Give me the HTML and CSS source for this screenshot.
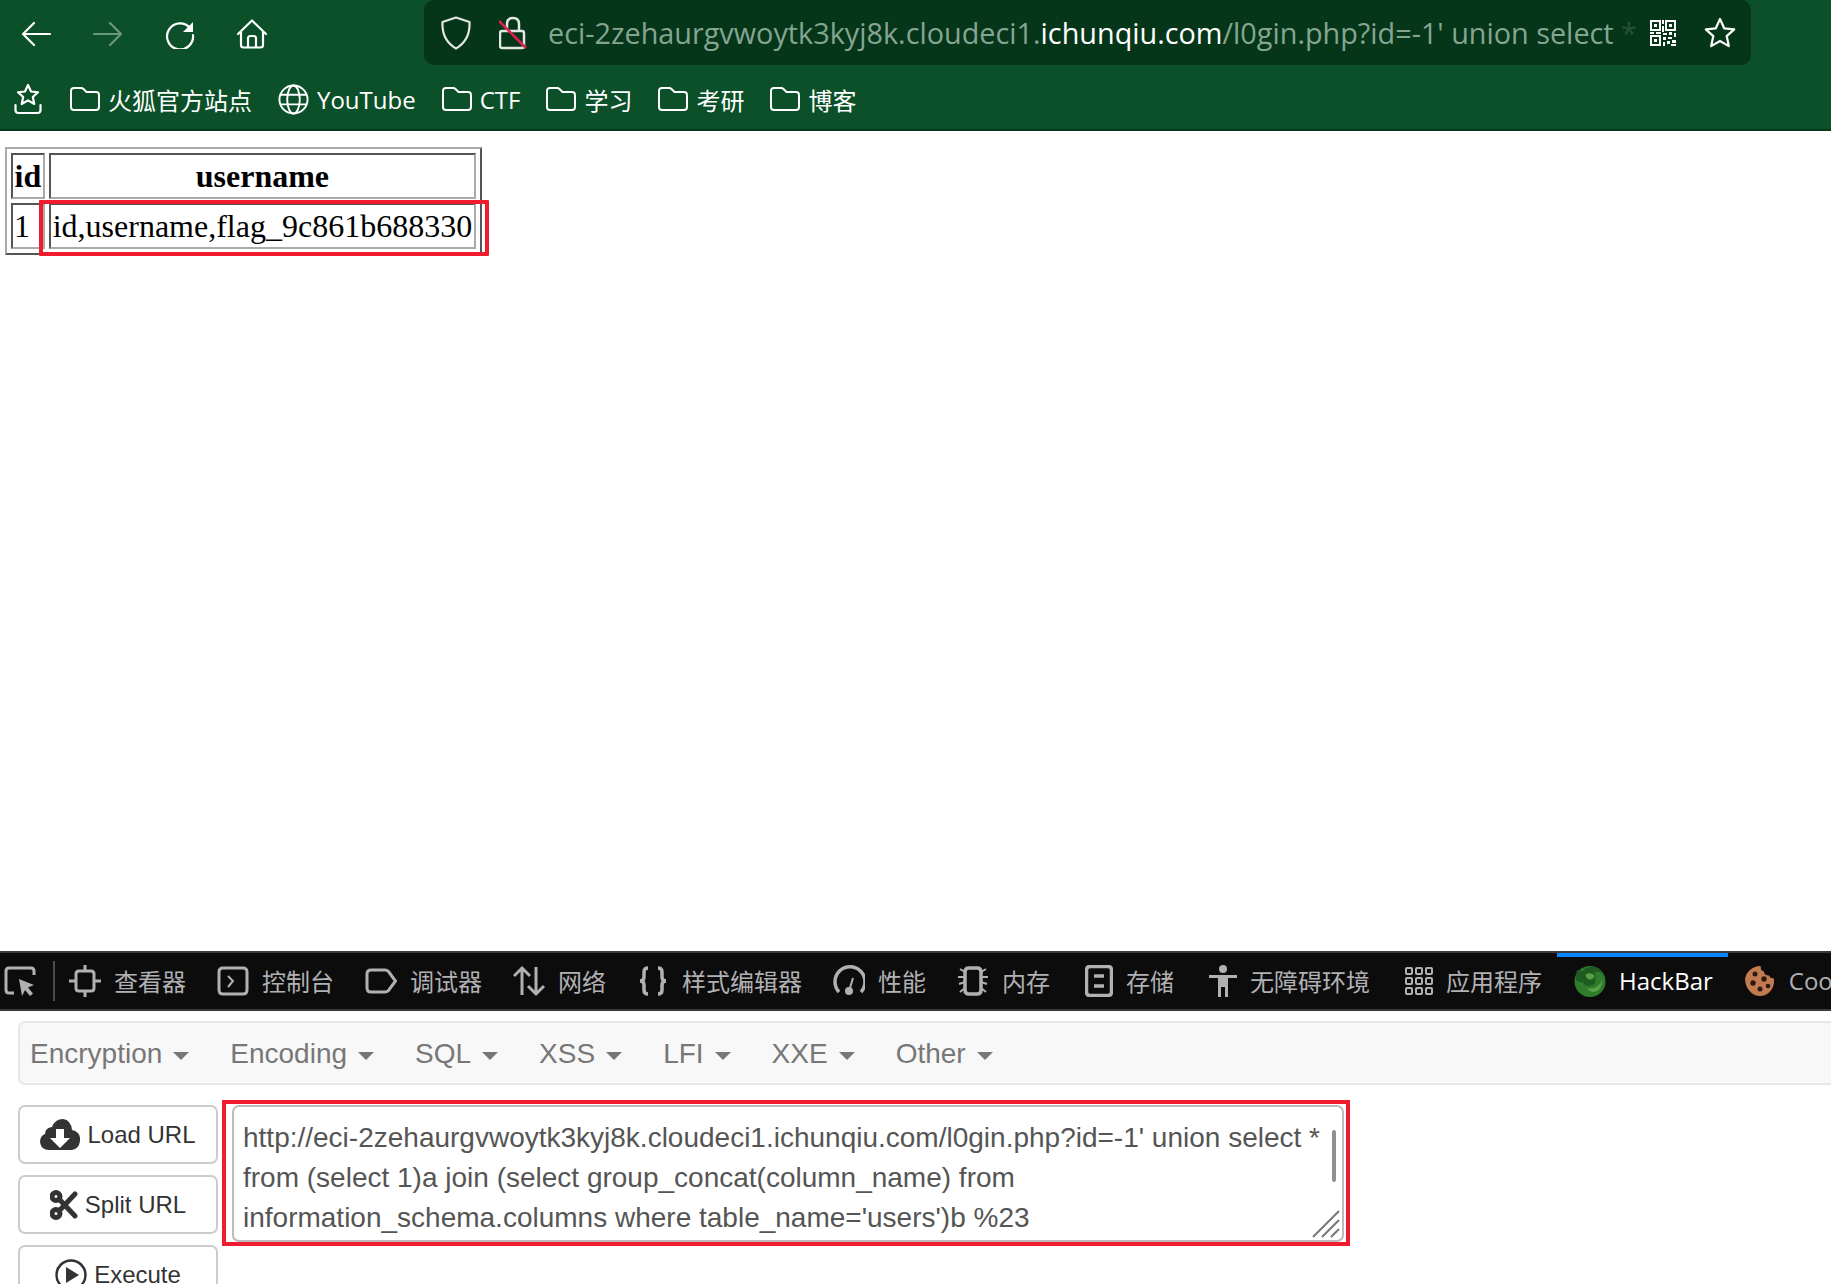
FILE: index.html
```html
<!DOCTYPE html>
<html lang="en">

<head>
  <meta charset="UTF-8">
  <title>l0gin.php</title>
  <link rel="stylesheet" href="styles.css">
</head>

<body>
  <svg class="defs" width="0" height="0">
    <symbol id="folder" viewBox="0 0 30 26">
      <path d="M4 2h7q1.500 0 2.500 1l3 3h9.500q3 0 3 3v12q0 3-3 3h-22q-3 0-3-3v-16q0-3 3-3z" fill="none" stroke="#fff" stroke-width="2" />
    </symbol>
  </svg>

  <div class="chrome">
    <div class="navbar">
      <div class="nav-buttons">
        <svg class="nav-icon" viewBox="0 0 30 30"><path d="M29 15H2M13 4 2 15l11 11" /></svg>
        <svg class="nav-icon dim" viewBox="0 0 30 30"><path d="M1 15h27M17 4l11 11-11 11" /></svg>
        <svg class="nav-icon" viewBox="0 0 30 30"><path d="M25 9A13 13 0 1 0 28 16" /><path class="solid" d="M28 3v10h-10z" /></svg>
        <svg class="nav-icon" viewBox="0 0 30 30"><path d="M1 15 15 1.500 29 15M4 12v14q0 2.500 2.500 2.500h17q2.500 0 2.500-2.500v-14M11 28.500v-9q0-2.500 2.500-2.500h3q2.500 0 2.500 2.500v9" /></svg>
      </div>
      <div class="urlbar">
        <svg class="shield" viewBox="0 0 30 34"><path d="M15 1.500 28.500 6q1 18-13.500 26.500Q.5 24 1.500 6z" /></svg>
        <svg class="lock" viewBox="0 0 28 34">
          <path class="lock-body" d="M3 15h20q2 0 2 2v13q0 2-2 2h-20q-2 0-2-2v-13q0-2 2-2zM8 15v-7q0-6 6-6t6 6v7" />
          <path class="lock-slash" d="M0 5 27 32" />
        </svg>
        <div class="url">eci-2zehaurgvwoytk3kyj8k.cloudeci1.<span class="domain">ichunqiu.com</span>/l0gin.php?id=-1' union select <span class="fade">*</span></div>
        <svg class="qr" viewBox="0 0 28 28">
          <path d="M1 1h11v11h-11zM3 3v7h7v-7zM16 1h11v11h-11zM18 3v7h7v-7zM1 16h11v11h-11zM3 18v7h7v-7z" fill-rule="evenodd" />
          <path d="M5 5h3v3h-3zM20 5h3v3h-3zM5 20h3v3h-3zM13 1h2v4h-2zM13 7h2v6h-2zM1 13h4v2h-4zM7 13h5v2h-5zM14 14h4v2h-4zM20 13h3v3h-3zM25 14h2v4h-2zM14 18h3v3h-3zM19 18h4v2h-4zM14 23h2v4h-2zM18 22h3v3h-3zM23 21h4v3h-4zM22 25h5v2h-5z" />
        </svg>
        <svg class="star" viewBox="0 0 32 32"><path d="M16 2l4.200 9.300 10 1.100-7.500 6.700 2.100 10-8.800-5.100-8.800 5.100 2.100-10-7.500-6.700 10-1.100z" /></svg>
      </div>
    </div>
    <div class="bookmarks">
      <svg class="import-icon" viewBox="0 0 28 32">
        <path d="M14 2l3 6.500 7 .8-5.200 4.700 1.500 7-6.300-3.600-6.300 3.600 1.500-7-5.200-4.700 7-.8z" />
        <path d="M1.500 22v5q0 3 3 3h19q3 0 3-3v-5" />
      </svg>
      <div class="bookmark first"><svg class="folder"><use href="#folder" /></svg>火狐官方站点</div>
      <div class="bookmark">
        <svg class="globe" viewBox="0 0 32 32">
          <circle cx="16" cy="16" r="14.500" />
          <ellipse cx="16" cy="16" rx="6.500" ry="14.500" />
          <path d="M2 11h28M2 21h28" />
        </svg>YouTube
      </div>
      <div class="bookmark"><svg class="folder"><use href="#folder" /></svg>CTF</div>
      <div class="bookmark"><svg class="folder"><use href="#folder" /></svg>学习</div>
      <div class="bookmark"><svg class="folder"><use href="#folder" /></svg>考研</div>
      <div class="bookmark"><svg class="folder"><use href="#folder" /></svg>博客</div>
    </div>
  </div>

  <div class="page">
    <table class="result">
      <tr>
        <th>id</th>
        <th>username</th>
      </tr>
      <tr>
        <td>1</td>
        <td class="marked">id,username,flag_9c861b688330</td>
      </tr>
    </table>
  </div>

  <div class="devtools">
    <svg class="pick" viewBox="0 0 32 32">
      <path class="tab-line" d="M30 10V6q0-3-3-3H5q-3 0-3 3v19q0 3 3 3h5" />
      <path class="tab-solid" d="M15 14l15 6-6 2.500 5 6-3 2.500-5-6-3 6z" />
    </svg>
    <div class="tab-sep"></div>
    <div class="tab first">
      <svg class="tab-icon" viewBox="0 0 32 32"><path class="tab-line thick" d="M10 6h12q3 0 3 3v14q0 3-3 3h-12q-3 0-3-3v-14q0-3 3-3zM16 0v6M16 26v6M0 16h7M25 16h7" /></svg>查看器
    </div>
    <div class="tab">
      <svg class="tab-icon" viewBox="0 0 32 32"><path class="tab-line thick" d="M6 3h20q4 0 4 4v18q0 4-4 4h-20q-4 0-4-4v-18q0-4 4-4z" /><path class="tab-line" d="M11 11l5 5-5 6" /></svg>控制台
    </div>
    <div class="tab">
      <svg class="tab-icon" viewBox="0 0 32 32"><path class="tab-line thick" d="M6 5h14q2 0 3.500 1.500l7 9.500-7 9.500q-1.500 1.500-3.500 1.500h-14q-4 0-4-4v-14q0-4 4-4z" /></svg>调试器
    </div>
    <div class="tab">
      <svg class="tab-icon" viewBox="0 0 32 32"><path class="tab-line thick" d="M9 30V3M1 11l8-8 8 8M23 2v27M15 21l8 8 8-8" /></svg>网络
    </div>
    <div class="tab">
      <svg class="tab-icon" viewBox="0 0 32 32"><path class="tab-line heavy" d="M11 3q-4 0-4 4v5q0 4-4 4 4 0 4 4v5q0 4 4 4M21 3q4 0 4 4v5q0 4 4 4-4 0-4 4v5q0 4-4 4" /></svg>样式编辑器
    </div>
    <div class="tab">
      <svg class="tab-icon" viewBox="0 0 32 32"><path class="tab-line heavy" d="M6 27A15 15 0 1 1 28 27" /><path class="tab-line" d="M16 26 20 13" /><circle class="tab-solid" cx="16" cy="26" r="4" /></svg>性能
    </div>
    <div class="tab">
      <svg class="tab-icon" viewBox="0 0 32 32"><path class="tab-line heavy" d="M12 3h8q4 0 4 4v18q0 4-4 4h-8q-4 0-4-4v-18q0-4 4-4z" /><path class="tab-line" d="M8 7l-5-3M8 12h-7M8 17l-6 2M8 23l-5 4M24 7l5-3M24 12h7M24 17l6 2M24 23l5 4" /></svg>内存
    </div>
    <div class="tab wide-gap">
      <svg class="tab-icon narrow" viewBox="0 0 28 32"><path class="tab-line heavy" d="M5 1.500h18q3.500 0 3.500 3.500v22q0 3.500-3.500 3.500h-18q-3.500 0-3.500-3.500v-22q0-3.500 3.500-3.500zM9 11h10M9 21h10" /></svg>存储
    </div>
    <div class="tab wide-gap">
      <svg class="tab-icon narrow" viewBox="0 0 28 32">
        <circle class="tab-solid" cx="14" cy="4" r="4" />
        <path class="tab-solid" d="M0 10h28v3h-9v19h-3v-10h-4v10h-3v-19h-9z" />
      </svg>无障碍环境
    </div>
    <div class="tab wide-gap">
      <svg class="tab-icon narrow" viewBox="0 0 28 28">
        <g class="tab-line">
          <rect x="1" y="1" width="6" height="6" rx="1" />
          <rect x="11" y="1" width="6" height="6" rx="1" />
          <rect x="21" y="1" width="6" height="6" rx="1" />
          <rect x="1" y="11" width="6" height="6" rx="1" />
          <rect x="11" y="11" width="6" height="6" rx="1" />
          <rect x="21" y="11" width="6" height="6" rx="1" />
          <rect x="1" y="21" width="6" height="6" rx="1" />
          <rect x="11" y="21" width="6" height="6" rx="1" />
          <rect x="21" y="21" width="6" height="6" rx="1" />
        </g>
      </svg>应用程序
    </div>
    <div class="tab selected">
      <svg class="tab-icon" viewBox="0 0 32 32">
        <circle cx="16" cy="16.500" r="15.500" fill="#2f7d2c" />
        <path d="M3 5q4 1 6 1 4-5 12-4 5 1 8 6-5-2-9-1 3 3 1 7 2 6-6 7-5 0-6-4-3 1-7-2 0-6 1-10z" fill="#1f5a20" />
        <path d="M12 9q6-2 9 2-3 5-7 3-3-2-2-5zM13 23q7 2 12-3 2-2 3-6 1 8-5 12-6 3-10-3z" fill="#58a048" />
      </svg>HackBar
    </div>
    <div class="tab">
      <svg class="tab-icon" viewBox="0 0 32 32">
        <path d="M14 1q2 0 3 .500-1 4 3 5 0 4 5 4 1 3 5 3 1 9-6 15-8 5-16 0-7-6-7-15 2-10 13-12.500z" fill="#c27a50" />
        <g fill="#2a1a14">
          <circle cx="11" cy="9" r="2.500" />
          <circle cx="20" cy="14" r="2.700" />
          <circle cx="9" cy="18" r="2.700" />
          <circle cx="16" cy="24" r="2.500" />
          <circle cx="24" cy="21" r="2.300" />
        </g>
      </svg>Cookies
    </div>
  </div>

  <div class="hackbar">
    <div class="menu">
      <div class="menu-item">Encryption<span class="caret"></span></div>
      <div class="menu-item">Encoding<span class="caret"></span></div>
      <div class="menu-item">SQL<span class="caret"></span></div>
      <div class="menu-item">XSS<span class="caret"></span></div>
      <div class="menu-item">LFI<span class="caret"></span></div>
      <div class="menu-item">XXE<span class="caret"></span></div>
      <div class="menu-item">Other<span class="caret"></span></div>
    </div>
    <div class="work">
      <div class="actions">
        <button class="action">
          <svg class="action-icon cloud" viewBox="0 0 40 32">
            <path d="M9 31q-8 0-9-8 0-6 5-8 0-6 7-7 3-8 11-8 8 1 9 11 9 2 8 11-1 8-8 9z" />
            <path class="knock" d="M16 10h8v9h6l-10 10-10-10h6z" />
          </svg>Load URL
        </button>
        <button class="action">
          <svg class="action-icon scissors" viewBox="0 0 28 30">
            <circle cx="6" cy="6.500" r="4" />
            <circle cx="6" cy="23.500" r="4" />
            <path d="M9 9 25 26M9 21 25 4" />
          </svg>Split URL
        </button>
        <button class="action">
          <svg class="action-icon play" viewBox="0 0 32 32">
            <circle cx="16" cy="16" r="14.500" />
            <path class="play-solid" d="M11 8 24 16 11 24z" />
          </svg>Execute
        </button>
      </div>
      <div class="url-box">
        <textarea class="url-input" rows="3">http://eci-2zehaurgvwoytk3kyj8k.cloudeci1.ichunqiu.com/l0gin.php?id=-1' union select * from (select 1)a join (select group_concat(column_name) from information_schema.columns where table_name='users')b %23</textarea>
        <div class="scroll-thumb"></div>
        <svg class="grip" viewBox="0 0 28 28"><path d="M1 27 27 1M10 27 27 10M19 27l8-8" /></svg>
      </div>
    </div>
  </div>
</body>

</html>
```

FILE: styles.css
```css
html,
body {
  margin: 0;
  height: 100%;
}

body {
  display: flex;
  flex-direction: column;
  height: 100vh;
  overflow: hidden;
  background-color: #fff;
  font-family: "Open Sans", "Noto Sans CJK SC", sans-serif;
}

.defs {
  position: absolute;
}

/* browser toolbar */
.chrome {
  height: 129px;
  background-color: #0b5028;
  border-bottom: 2px solid #053a1c;
  color: #fff;
}

.navbar {
  display: flex;
  height: 65px;
}

.nav-buttons {
  display: flex;
  align-items: center;
  gap: 42px;
  width: 424px;
  padding-left: 21px;
  padding-top: 2px;
  box-sizing: border-box;
}

.nav-icon {
  width: 30px;
  height: 30px;
  fill: none;
  stroke: #fff;
  stroke-width: 2.200;
  stroke-linecap: round;
  stroke-linejoin: round;
}

.nav-icon.dim {
  opacity: 0.4;
}

.nav-icon .solid {
  fill: #fff;
  stroke: none;
}

.urlbar {
  display: flex;
  align-items: center;
  width: 1327px;
  height: 65px;
  background-color: #053619;
  border-radius: 10px;
  box-sizing: border-box;
  padding-left: 17px;
}

.shield {
  width: 30px;
  height: 34px;
  fill: none;
  stroke: #e3e8e5;
  stroke-width: 2.200;
  stroke-linejoin: round;
}

.lock {
  width: 28px;
  height: 34px;
  margin-left: 28px;
  fill: none;
}

.lock-body {
  stroke: #e3e8e5;
  stroke-width: 2.500;
}

.lock-slash {
  stroke: #e0204a;
  stroke-width: 2.500;
}

.url {
  width: 1097px;
  margin-left: 21px;
  font-size: 28.800px;
  white-space: nowrap;
  overflow: hidden;
  color: #85a593;
}

.url .domain {
  color: #fff;
}

.url .fade {
  opacity: 0.25;
}

.qr {
  width: 28px;
  height: 28px;
  margin-left: 4px;
  fill: #fff;
}

.star {
  width: 32px;
  height: 32px;
  margin-left: 27px;
  fill: none;
  stroke: #fff;
  stroke-width: 2.200;
  stroke-linejoin: round;
}

.bookmarks {
  display: flex;
  align-items: center;
  gap: 26px;
  height: 64px;
  box-sizing: border-box;
  padding: 4px 0 0 14px;
  font-size: 24px;
}

.import-icon {
  width: 28px;
  height: 32px;
  fill: none;
  stroke: #fff;
  stroke-width: 2.200;
  stroke-linejoin: round;
  stroke-linecap: round;
}

.bookmark {
  display: flex;
  align-items: center;
  gap: 8px;
  white-space: nowrap;
}

.bookmark.first {
  margin-left: 2px;
}

.folder {
  width: 30px;
  height: 26px;
}

.globe {
  width: 31px;
  height: 31px;
  fill: none;
  stroke: #fff;
  stroke-width: 2;
}

/* page content */
.page {
  flex: 1;
  padding: 16px 0 0 5px;
}

.result {
  border: 2px solid;
  border-color: #aaa #555 #555 #aaa;
  border-spacing: 4px;
  font-family: "Liberation Serif", serif;
  font-size: 32px;
  line-height: 38px;
}

.result th,
.result td {
  position: relative;
  padding: 2px 2px;
  border: 2px solid;
  border-color: #555 #aaa #aaa #555;
  color: #000;
}

.result tr > :first-child {
  padding: 2px 1.500px;
  text-align: left;
}

.result td:first-child {
  padding-left: 1px;
}

.marked::after {
  content: "";
  position: absolute;
  top: -5px;
  right: -15px;
  bottom: -9px;
  left: -12px;
  border: 4px solid #ee1c2e;
  border-radius: 1px;
}

/* devtools tabs */
.devtools {
  display: flex;
  align-items: center;
  height: 56px;
  border-top: 2px solid #38383d;
  border-bottom: 2px solid #38383d;
  background-color: #0c0c0d;
  color: #b1b1b3;
  font-size: 24px;
  overflow: hidden;
  white-space: nowrap;
}

.pick {
  flex: none;
  width: 32px;
  height: 32px;
  margin-left: 4px;
}

.tab-sep {
  flex: none;
  width: 2px;
  height: 40px;
  margin-left: 17px;
  background-color: #4a4a4f;
}

.tab {
  display: flex;
  flex: none;
  align-items: center;
  gap: 13px;
  height: 56px;
  box-sizing: border-box;
  padding-bottom: 2px;
  margin-left: 31px;
}

.tab.first {
  margin-left: 14px;
}

.tab.wide-gap {
  margin-left: 35px;
}

.tab.selected {
  position: relative;
  margin-left: 15px;
  padding: 0 15px 2px 17px;
  color: #fff;
}

.tab.selected::before {
  content: "";
  position: absolute;
  top: 0;
  left: 0;
  right: 0;
  height: 4px;
  background-color: #0a84ff;
}

.tab.selected + .tab {
  margin-left: 16px;
}

.tab-icon {
  width: 32px;
  height: 32px;
  margin-top: 2px;
}

.tab-icon.narrow {
  width: 28px;
}

.tab-line {
  fill: none;
  stroke: #b1b1b3;
  stroke-width: 2;
}

.tab-line.thick {
  stroke-width: 3;
}

.tab-line.heavy {
  stroke-width: 3.500;
}

.pick .tab-line {
  stroke-width: 3;
}

.tab-solid {
  fill: #b1b1b3;
}

/* hackbar panel */
.hackbar {
  height: 273px;
  flex: none;
  overflow: hidden;
  padding: 10px 0 0 18px;
  box-sizing: border-box;
  font-family: "Liberation Sans", sans-serif;
}

.menu {
  display: flex;
  align-items: center;
  gap: 41px;
  height: 58px;
  margin-right: -8px;
  padding: 2px 0 0 10px;
  background-color: #f8f8f8;
  border: 2px solid #e7e7e7;
  border-radius: 7px;
  font-size: 28px;
  color: #777;
}

.menu-item {
  display: flex;
  align-items: center;
  white-space: nowrap;
}

.caret {
  width: 0;
  height: 0;
  margin-left: 11px;
  margin-top: 4px;
  border-top: 8px solid #777;
  border-left: 8px solid transparent;
  border-right: 8px solid transparent;
}

.work {
  display: flex;
  align-items: flex-start;
  gap: 14px;
  margin-top: 20px;
}

.actions {
  display: flex;
  flex-direction: column;
  flex: none;
  gap: 11px;
  width: 200px;
}

.action {
  display: flex;
  align-items: center;
  justify-content: center;
  gap: 7px;
  height: 59px;
  padding: 1px 0 0;
  background-color: #fff;
  border: 2px solid #ccc;
  border-radius: 7px;
  font-family: inherit;
  font-size: 24px;
  color: #333;
}

.action-icon {
  flex: none;
}

.cloud {
  width: 40px;
  height: 32px;
  fill: #333;
}

.knock {
  fill: #fff;
}

.scissors {
  width: 28px;
  height: 30px;
  fill: none;
  stroke: #333;
  stroke-width: 5;
  stroke-linecap: round;
}

.play {
  width: 32px;
  height: 32px;
  fill: none;
  stroke: #333;
  stroke-width: 2.500;
}

.play-solid {
  fill: #333;
  stroke: none;
}

.url-box {
  position: relative;
  display: flex;
  width: 1112px;
}

.url-box::after {
  content: "";
  position: absolute;
  top: -5px;
  right: -6px;
  bottom: -4px;
  left: -10px;
  border: 4px solid #ee1c2e;
  pointer-events: none;
}

.url-input {
  display: block;
  width: 100%;
  height: 137px;
  box-sizing: border-box;
  padding: 11px 9px;
  border: 2px solid #bbb;
  border-radius: 7px;
  outline: none;
  resize: none;
  overflow: hidden;
  font-family: inherit;
  font-size: 28px;
  line-height: 40px;
  color: #555;
}

.scroll-thumb {
  position: absolute;
  top: 25px;
  right: 8px;
  width: 4px;
  height: 52px;
  border-radius: 2px;
  background-color: #8f8f8f;
}

.grip {
  position: absolute;
  right: 4px;
  bottom: 4px;
  width: 28px;
  height: 28px;
  fill: none;
  stroke: #777;
  stroke-width: 2;
}
```
